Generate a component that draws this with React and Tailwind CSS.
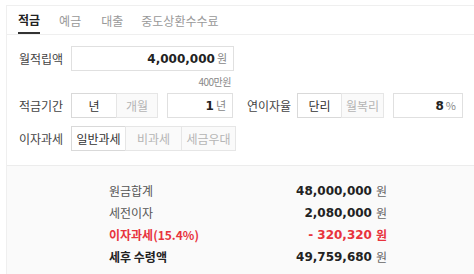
import React from "react";

const kr = { fontFamily: '"Noto Sans CJK KR", "Noto Sans", sans-serif' };
const num = { fontFamily: '"DejaVu Sans", "Noto Sans CJK KR", sans-serif' };

function Toggle({ items, active, widths }) {
  return (
    <div className="flex h-[25px]">
      {items.map((t, i) => (
        <div
          key={t}
          className={
            "flex items-center justify-center border text-[12px] " +
            widths[i] +
            " " +
            (i === active
              ? "border-[#d9d9d9] bg-white text-[#333]"
              : "border-[#e6e6e6] bg-[#fafafa] text-[#b5b5b5]") +
            (i > 0 ? " -ml-px" : "")
          }
        >
          {t}
        </div>
      ))}
    </div>
  );
}

function Input({ value, unit, w }) {
  return (
    <div className={"flex h-[25px] items-center justify-end border border-[#e0e0e0] bg-white pr-[6px] " + w}>
      <span style={num} className="text-[12px] font-bold text-[#222]">{value}</span>
      <span className="ml-[2px] text-[11px] text-[#888]">{unit}</span>
    </div>
  );
}

function ResultRow({ label, value, red, bold }) {
  return (
    <div className="flex h-[22px] items-center">
      <div
        className={
          "w-[140px] text-[12px] " +
          (red ? "font-bold text-[#e8333d]" : bold ? "font-bold text-[#222]" : "text-[#555]")
        }
      >
        {label}
      </div>
      <div className="flex w-[138px] items-center justify-end">
        <span style={num} className={"text-[12px] font-bold " + (red ? "text-[#e8333d]" : "text-[#222]")}>
          {value}
        </span>
        <span className={"ml-[4px] text-[12px] " + (red ? "font-bold text-[#e8333d]" : "text-[#666]")}>원</span>
      </div>
    </div>
  );
}

export default function App() {
  return (
    <div style={kr} className="h-[274px] w-[474px] overflow-hidden bg-white pl-[6px] pt-[5px]">
      <div className="h-[280px] w-[480px] border-l border-t border-[#efefef] bg-white">
        <div className="flex h-[29px] items-end border-b border-[#efefef] pl-[11px]">
          <div className="flex h-full flex-col justify-center border-b-2 border-[#333] pt-[2px] text-[12px] font-bold text-[#222]">
            적금
          </div>
          <div className="ml-[19px] flex h-full items-center pt-[2px] text-[12px] text-[#999]">예금</div>
          <div className="ml-[20px] flex h-full items-center pt-[2px] text-[12px] text-[#999]">대출</div>
          <div className="ml-[18px] flex h-full items-center pt-[2px] text-[12px] text-[#999]">중도상환수수료</div>
        </div>

        <div className="pl-[12px] pt-[11px]">
          <div className="flex items-center">
            <div className="w-[52px] text-[12px] text-[#444]">월적립액</div>
            <Input value="4,000,000" unit="원" w="w-[163px]" />
          </div>
          <div className="flex h-[21px] w-[215px] items-center justify-end pr-[3px] text-[10px] tracking-[-0.5px] text-[#888]">
            400만원
          </div>
          <div className="mt-[1px] flex items-center">
            <div className="w-[52px] text-[12px] text-[#444]">적금기간</div>
            <Toggle items={["년", "개월"]} active={0} widths={["w-[46px]", "w-[42px]"]} />
            <div className="ml-[9px]">
              <Input value="1" unit="년" w="w-[66px]" />
            </div>
            <div className="ml-[14px] w-[50px] text-[12px] text-[#444]">연이자율</div>
            <Toggle items={["단리", "월복리"]} active={0} widths={["w-[45px]", "w-[43px]"]} />
            <div className="ml-[9px]">
              <Input value="8" unit="%" w="w-[70px]" />
            </div>
          </div>
          <div className="mt-[8px] flex items-center">
            <div className="w-[52px] text-[12px] text-[#444]">이자과세</div>
            <Toggle
              items={["일반과세", "비과세", "세금우대"]}
              active={0}
              widths={["w-[55px]", "w-[57px]", "w-[55px]"]}
            />
          </div>
        </div>

        <div className="mt-[14px] h-[120px] border-t border-[#ececec] bg-[#fafafa] pl-[102px] pt-[14px]">
          <ResultRow label="원금합계" value="48,000,000" />
          <ResultRow label="세전이자" value="2,080,000" />
          <ResultRow label="이자과세(15.4%)" value="- 320,320" red />
          <ResultRow label="세후 수령액" value="49,759,680" bold />
        </div>
      </div>
    </div>
  );
}
